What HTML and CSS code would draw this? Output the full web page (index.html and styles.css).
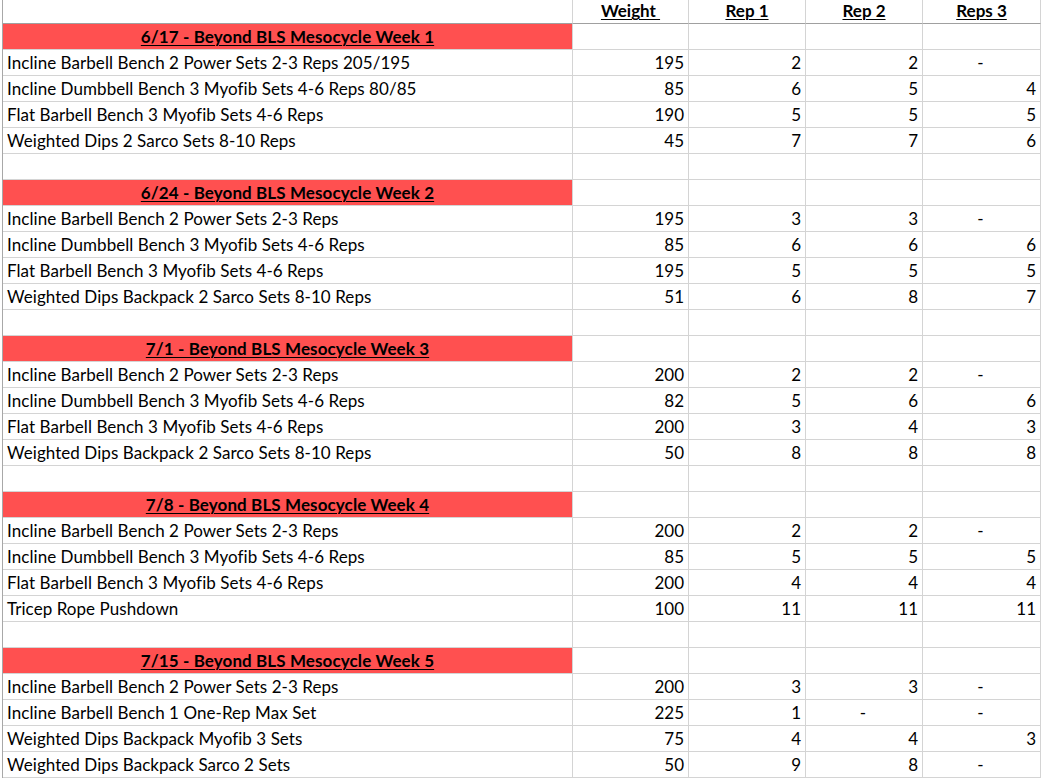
FILE: index.html
```html
<!DOCTYPE html>
<html>
<head>
<meta charset="utf-8">
<title>Beyond BLS Mesocycle</title>
<link rel="stylesheet" href="styles.css">
</head>
<body>
<div class="sheet">
  <div class="row head">
    <div class="cell"></div>
    <div class="cell hd"><u>Weight </u></div>
    <div class="cell hd"><u>Rep 1</u></div>
    <div class="cell hd"><u>Rep 2</u></div>
    <div class="cell hd"><u>Reps 3</u></div>
  </div>

  <div class="row">
    <div class="cell title"><u>6/17 - Beyond BLS Mesocycle Week 1</u></div>
    <div class="cell"></div><div class="cell"></div><div class="cell"></div><div class="cell"></div>
  </div>
  <div class="row">
    <div class="cell name">Incline Barbell Bench 2 Power Sets 2-3 Reps 205/195</div>
    <div class="cell num">195</div><div class="cell num">2</div><div class="cell num">2</div><div class="cell dash">-</div>
  </div>
  <div class="row">
    <div class="cell name">Incline Dumbbell Bench 3 Myofib Sets 4-6 Reps 80/85</div>
    <div class="cell num">85</div><div class="cell num">6</div><div class="cell num">5</div><div class="cell num">4</div>
  </div>
  <div class="row">
    <div class="cell name">Flat Barbell Bench 3 Myofib Sets 4-6 Reps</div>
    <div class="cell num">190</div><div class="cell num">5</div><div class="cell num">5</div><div class="cell num">5</div>
  </div>
  <div class="row">
    <div class="cell name">Weighted Dips 2 Sarco Sets 8-10 Reps</div>
    <div class="cell num">45</div><div class="cell num">7</div><div class="cell num">7</div><div class="cell num">6</div>
  </div>
  <div class="row">
    <div class="cell"></div><div class="cell"></div><div class="cell"></div><div class="cell"></div><div class="cell"></div>
  </div>

  <div class="row">
    <div class="cell title"><u>6/24 - Beyond BLS Mesocycle Week 2</u></div>
    <div class="cell"></div><div class="cell"></div><div class="cell"></div><div class="cell"></div>
  </div>
  <div class="row">
    <div class="cell name">Incline Barbell Bench 2 Power Sets 2-3 Reps</div>
    <div class="cell num">195</div><div class="cell num">3</div><div class="cell num">3</div><div class="cell dash">-</div>
  </div>
  <div class="row">
    <div class="cell name">Incline Dumbbell Bench 3 Myofib Sets 4-6 Reps</div>
    <div class="cell num">85</div><div class="cell num">6</div><div class="cell num">6</div><div class="cell num">6</div>
  </div>
  <div class="row">
    <div class="cell name">Flat Barbell Bench 3 Myofib Sets 4-6 Reps</div>
    <div class="cell num">195</div><div class="cell num">5</div><div class="cell num">5</div><div class="cell num">5</div>
  </div>
  <div class="row">
    <div class="cell name">Weighted Dips Backpack 2 Sarco Sets 8-10 Reps</div>
    <div class="cell num">51</div><div class="cell num">6</div><div class="cell num">8</div><div class="cell num">7</div>
  </div>
  <div class="row">
    <div class="cell"></div><div class="cell"></div><div class="cell"></div><div class="cell"></div><div class="cell"></div>
  </div>

  <div class="row">
    <div class="cell title"><u>7/1 - Beyond BLS Mesocycle Week 3</u></div>
    <div class="cell"></div><div class="cell"></div><div class="cell"></div><div class="cell"></div>
  </div>
  <div class="row">
    <div class="cell name">Incline Barbell Bench 2 Power Sets 2-3 Reps</div>
    <div class="cell num">200</div><div class="cell num">2</div><div class="cell num">2</div><div class="cell dash">-</div>
  </div>
  <div class="row">
    <div class="cell name">Incline Dumbbell Bench 3 Myofib Sets 4-6 Reps</div>
    <div class="cell num">82</div><div class="cell num">5</div><div class="cell num">6</div><div class="cell num">6</div>
  </div>
  <div class="row">
    <div class="cell name">Flat Barbell Bench 3 Myofib Sets 4-6 Reps</div>
    <div class="cell num">200</div><div class="cell num">3</div><div class="cell num">4</div><div class="cell num">3</div>
  </div>
  <div class="row">
    <div class="cell name">Weighted Dips Backpack 2 Sarco Sets 8-10 Reps</div>
    <div class="cell num">50</div><div class="cell num">8</div><div class="cell num">8</div><div class="cell num">8</div>
  </div>
  <div class="row">
    <div class="cell"></div><div class="cell"></div><div class="cell"></div><div class="cell"></div><div class="cell"></div>
  </div>

  <div class="row">
    <div class="cell title"><u>7/8 - Beyond BLS Mesocycle Week 4</u></div>
    <div class="cell"></div><div class="cell"></div><div class="cell"></div><div class="cell"></div>
  </div>
  <div class="row">
    <div class="cell name">Incline Barbell Bench 2 Power Sets 2-3 Reps</div>
    <div class="cell num">200</div><div class="cell num">2</div><div class="cell num">2</div><div class="cell dash">-</div>
  </div>
  <div class="row">
    <div class="cell name">Incline Dumbbell Bench 3 Myofib Sets 4-6 Reps</div>
    <div class="cell num">85</div><div class="cell num">5</div><div class="cell num">5</div><div class="cell num">5</div>
  </div>
  <div class="row">
    <div class="cell name">Flat Barbell Bench 3 Myofib Sets 4-6 Reps</div>
    <div class="cell num">200</div><div class="cell num">4</div><div class="cell num">4</div><div class="cell num">4</div>
  </div>
  <div class="row">
    <div class="cell name">Tricep Rope Pushdown</div>
    <div class="cell num">100</div><div class="cell num">11</div><div class="cell num">11</div><div class="cell num">11</div>
  </div>
  <div class="row">
    <div class="cell"></div><div class="cell"></div><div class="cell"></div><div class="cell"></div><div class="cell"></div>
  </div>

  <div class="row">
    <div class="cell title"><u>7/15 - Beyond BLS Mesocycle Week 5</u></div>
    <div class="cell"></div><div class="cell"></div><div class="cell"></div><div class="cell"></div>
  </div>
  <div class="row">
    <div class="cell name">Incline Barbell Bench 2 Power Sets 2-3 Reps</div>
    <div class="cell num">200</div><div class="cell num">3</div><div class="cell num">3</div><div class="cell dash">-</div>
  </div>
  <div class="row">
    <div class="cell name">Incline Barbell Bench 1 One-Rep Max Set</div>
    <div class="cell num">225</div><div class="cell num">1</div><div class="cell dash">-</div><div class="cell dash">-</div>
  </div>
  <div class="row">
    <div class="cell name">Weighted Dips Backpack Myofib 3 Sets</div>
    <div class="cell num">75</div><div class="cell num">4</div><div class="cell num">4</div><div class="cell num">3</div>
  </div>
  <div class="row">
    <div class="cell name">Weighted Dips Backpack Sarco 2 Sets</div>
    <div class="cell num">50</div><div class="cell num">9</div><div class="cell num">8</div><div class="cell dash">-</div>
  </div>
</div>
</body>
</html>
```

FILE: styles.css
```css
html, body {
  margin: 0;
  padding: 0;
  background: #ffffff;
}

body {
  font-family: Lato, "Liberation Sans", sans-serif;
  font-size: 17px;
  color: #000000;
  overflow: hidden;
}

.sheet {
  margin-left: 2px;
  border-left: 1px solid #a8a8a8;
  width: 1038px;
}

.row {
  display: grid;
  grid-template-columns: 570px 116px 117px 117px 118px;
  height: 26px;
}

.row.head {
  height: 24px;
}

.cell {
  box-sizing: border-box;
  border-right: 1px solid #d4d4d4;
  border-bottom: 1px solid #d4d4d4;
  padding: 0 4px;
  line-height: 25px;
  white-space: pre;
  overflow: hidden;
}

.name {
  text-align: left;
  letter-spacing: 0.06px;
}

.head .cell {
  border-bottom-color: #a0a0a0;
  line-height: 22px;
}

.hd {
  text-align: center;
  font-weight: bold;
}

.title {
  background: #ff5050;
  text-align: center;
  font-weight: bold;
  letter-spacing: 0.1px;
}

u {
  text-decoration: underline;
  text-decoration-thickness: 1px;
  text-underline-offset: 2px;
}

.num {
  text-align: right;
}

.dash {
  text-align: center;
  padding-right: 6px;
}
```
